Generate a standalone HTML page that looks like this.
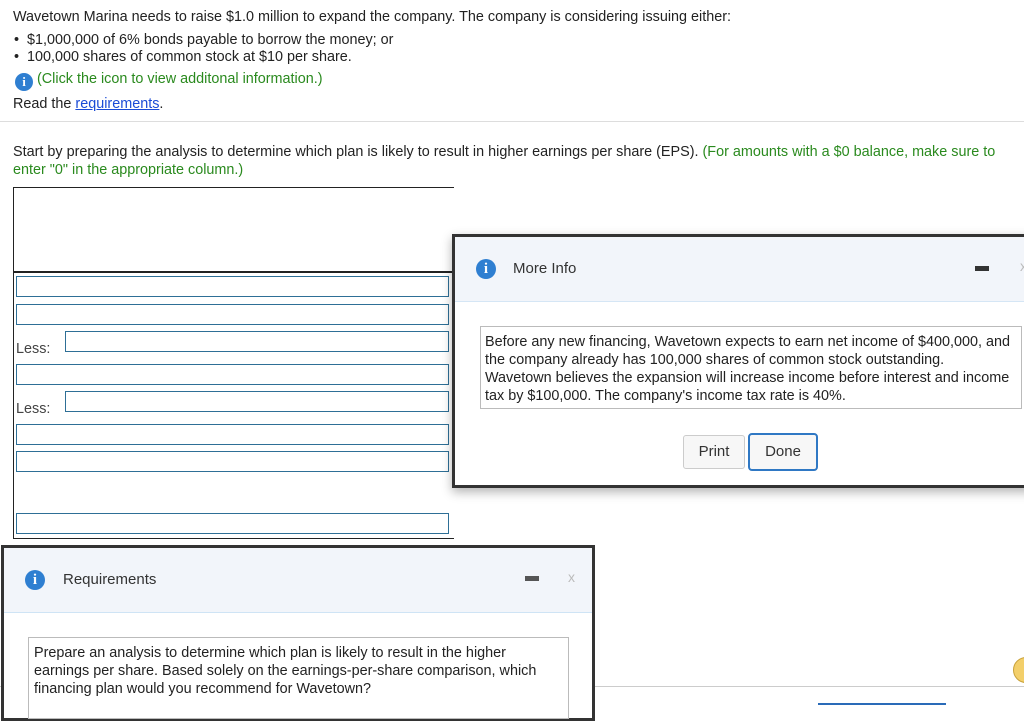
<!DOCTYPE html>
<html><head><style>
body{margin:0;width:1024px;height:705px;overflow:hidden;background:#fff;font-family:"Liberation Sans",Arial,sans-serif;font-size:14.4px;color:#222;position:relative}
.a{position:absolute;white-space:nowrap}
.in{position:absolute;height:19px;border:1.5px solid #2e6f96;background:#fff;box-sizing:content-box}
.ic{display:inline-block;border-radius:50%;background:#2f7fd1;color:#fff;font:bold 13px "Liberation Serif",serif;text-align:center}
.g{color:#2a8a1e}
</style></head><body>
<div class="a" style="left:13px;top:9px">Wavetown Marina needs to raise $1.0 million to expand the company. The company is considering issuing either:</div>
<div class="a" style="left:14px;top:32px">•&nbsp; $1,000,000 of 6% bonds payable to borrow the money; or</div>
<div class="a" style="left:14px;top:49px">•&nbsp; 100,000 shares of common stock at $10 per share.</div>
<div class="a" style="left:15px;top:71px"><span class="ic" style="width:18px;height:18px;line-height:18px;vertical-align:-3px">i</span> <span class="g">(Click the icon to view additonal information.)</span></div>
<div class="a" style="left:13px;top:96px">Read the <span style="color:#1a4bd6;text-decoration:underline">requirements</span>.</div>
<div class="a" style="left:0;top:121px;width:1024px;height:1px;background:#ddd"></div>
<div class="a" style="left:13px;top:144px">Start by preparing the analysis to determine which plan is likely to result in higher earnings per share (EPS). <span class="g">(For amounts with a $0 balance, make sure to</span></div>
<div class="a g" style="left:13px;top:162px">enter "0" in the appropriate column.)</div>

<div class="a" style="left:13px;top:187px;width:440px;height:350px;border-left:1.5px solid #222;border-top:1.5px solid #222;border-bottom:1.5px solid #222"></div>
<div class="a" style="left:13px;top:271px;width:440px;height:1.5px;background:#222"></div>
<div class="in" style="left:16px;top:276px;width:431px"></div>
<div class="in" style="left:16px;top:304px;width:431px"></div>
<div class="a" style="left:16px;top:341px;color:#444">Less:</div>
<div class="in" style="left:65px;top:331px;width:382px"></div>
<div class="in" style="left:16px;top:364px;width:431px"></div>
<div class="a" style="left:16px;top:401px;color:#444">Less:</div>
<div class="in" style="left:65px;top:391px;width:382px"></div>
<div class="in" style="left:16px;top:424px;width:431px"></div>
<div class="in" style="left:16px;top:451px;width:431px"></div>
<div class="in" style="left:16px;top:513px;width:431px"></div>

<div class="a" style="left:0;top:686px;width:1024px;height:1px;background:#ccc"></div>
<div class="a" style="left:1013px;top:657px;width:24px;height:24px;border-radius:50%;background:#f3cf6a;border:1px solid #c9a23a"></div>
<div class="a" style="left:818px;top:703px;width:128px;height:2px;background:#2a6bb8"></div>

<div class="a" style="left:452px;top:234px;width:580px;height:248px;border:3px solid #333;background:#fff;box-shadow:0 4px 10px rgba(0,0,0,.3)">
 <div style="position:absolute;left:0;top:0;right:0;height:64px;background:#f2f5fa;border-bottom:1px solid #d5e6f5"></div>
 <span class="ic a" style="left:21px;top:22px;width:20px;height:20px;line-height:20px;font-size:15px">i</span>
 <div class="a" style="left:58px;top:23px;color:#333;font-size:15px">More Info</div>
 <div class="a" style="left:520px;top:29px;width:14px;height:5px;background:#333"></div>
 <div class="a" style="left:565px;top:21px;color:#bbb;font-size:14px">x</div>
 <div class="a" style="left:25px;top:89px;width:540px;height:81px;border:1px solid #bbb"></div>
 <div class="a" style="left:30px;top:96px;line-height:18px">Before any new financing, Wavetown expects to earn net income of $400,000, and<br>the company already has 100,000 shares of common stock outstanding.<br>Wavetown believes the expansion will increase income before interest and income<br>tax by $100,000. The company's income tax rate is 40%.</div>
 <div class="a" style="left:228px;top:198px;width:60px;height:32px;border:1px solid #ccc;border-radius:3px;background:#f7f7f7;text-align:center;line-height:32px;font-size:15px;color:#333">Print</div>
 <div class="a" style="left:293px;top:196px;width:66px;height:34px;border:2px solid #2f78c4;border-radius:4px;background:#f7f7f7;text-align:center;line-height:34px;font-size:15px;color:#333">Done</div>
</div>

<div class="a" style="left:1px;top:545px;width:588px;height:170px;border:3px solid #333;background:#fff">
 <div style="position:absolute;left:0;top:0;right:0;height:64px;background:#f2f5fa;border-bottom:1px solid #cfe4f5"></div>
 <span class="ic a" style="left:21px;top:22px;width:20px;height:20px;line-height:20px;font-size:15px">i</span>
 <div class="a" style="left:59px;top:23px;color:#333;font-size:15px">Requirements</div>
 <div class="a" style="left:521px;top:28px;width:14px;height:5px;background:#555"></div>
 <div class="a" style="left:564px;top:21px;color:#bbb;font-size:14px">x</div>
 <div class="a" style="left:24px;top:89px;width:539px;height:80px;border:1px solid #bbb"></div>
 <div class="a" style="left:30px;top:96px;line-height:18px">Prepare an analysis to determine which plan is likely to result in the higher<br>earnings per share. Based solely on the earnings-per-share comparison, which<br>financing plan would you recommend for Wavetown?</div>
</div>
</body></html>
